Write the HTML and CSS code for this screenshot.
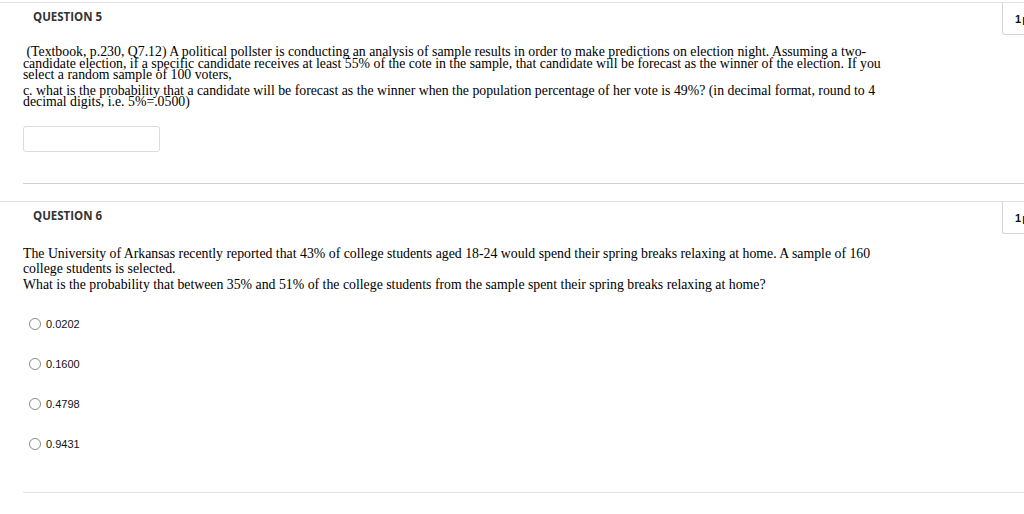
FILE: index.html
```html
<!DOCTYPE html>
<html>
<head>
<meta charset="utf-8">
<link rel="stylesheet" href="styles.css">
</head>
<body>
<div class="page">
  <section class="question q5">
    <div class="q-head">
      <h3 class="q-title">QUESTION 5</h3>
      <div class="q-points">1 points</div>
    </div>
    <div class="q-body">
      <p class="tight">&nbsp;(Textbook, p.230, Q7.12) A political pollster is conducting an analysis of sample results in order to make predictions on election night. Assuming a two-candidate election, if a specific candidate receives at least 55% of the cote in the sample, that candidate will be forecast as the winner of the election. If you select a random sample of 100 voters,</p>
      <p class="tight second">c. what is the probability that a candidate will be forecast as the winner when the population percentage of her vote is 49%? (in decimal format, round to 4 decimal digits, i.e. 5%=.0500)</p>
      <div class="answer-box"></div>
      <div class="sep"></div>
    </div>
  </section>
  <section class="question q6">
    <div class="q-head">
      <h3 class="q-title">QUESTION 6</h3>
      <div class="q-points">1 points</div>
    </div>
    <div class="q-body">
      <p class="loose">The University of Arkansas recently reported that 43% of college students aged 18-24 would spend their spring breaks relaxing at home. A sample of 160 college students is selected.<br>What is the probability that between 35% and 51% of the college students from the sample spent their spring breaks relaxing at home?</p>
      <ul class="options">
        <li class="option"><span class="radio"></span><span class="opt-text">0.0202</span></li>
        <li class="option"><span class="radio"></span><span class="opt-text">0.1600</span></li>
        <li class="option"><span class="radio"></span><span class="opt-text">0.4798</span></li>
        <li class="option"><span class="radio"></span><span class="opt-text">0.9431</span></li>
      </ul>
      <div class="sep bottom"></div>
    </div>
  </section>
</div>
</body>
</html>
```

FILE: styles.css
```css
html, body {
  margin: 0;
  padding: 0;
  overflow: hidden;
  background: #fff;
}
.page {
  width: 1080px;
  padding-top: 2px;
}
.question {
  border-top: 1px solid #e3e3e3;
}
.q-head {
  display: flex;
  justify-content: space-between;
  align-items: flex-start;
  height: 32px;
}
.q-title {
  margin: 0;
  padding: 6px 0 0 33px;
  font-family: "Open Sans", sans-serif;
  font-weight: 700;
  font-size: 11.5px;
  line-height: 15px;
  color: #333;
}
.q-points {
  box-sizing: border-box;
  width: 78px;
  height: 32px;
  border-left: 1px solid #d6d6d6;
  border-bottom: 1px solid #d6d6d6;
  border-bottom-left-radius: 3px;
  padding: 9px 0 0 12px;
  font-family: "Liberation Sans", Arial, sans-serif;
  font-weight: 700;
  font-size: 11px;
  line-height: 14px;
  word-spacing: -2px;
  color: #111;
}
.q-body {
  padding-left: 23px;
}
.q5 .q-body {
  padding-top: 11px;
}
.q6 .q-body {
  padding-top: 11.5px;
}
.tight, .loose {
  margin: 0;
  width: 870px;
  font-family: "Liberation Serif", "Times New Roman", serif;
  font-size: 13.8px;
  color: #000;
}
.tight {
  line-height: 11.5px;
}
.tight.second {
  margin-top: 4px;
}
.loose {
  line-height: 15.5px;
}
.answer-box {
  box-sizing: border-box;
  width: 137px;
  height: 26px;
  margin-top: 18.5px;
  border: 1px solid #dcdcdc;
  border-radius: 3px;
}
.sep {
  margin-top: 31px;
  height: 0;
  border-top: 1px solid #d0d0d0;
}
.q6 {
  margin-top: 17px;
}
.options {
  list-style: none;
  margin: 11.5px 0 0 0;
  padding: 0 0 0 6px;
}
.option {
  display: flex;
  align-items: center;
  gap: 5px;
  height: 40px;
}
.radio {
  box-sizing: border-box;
  width: 12px;
  height: 12px;
  border: 1px solid #8a8a8a;
  border-radius: 50%;
  background: #fff;
}
.opt-text {
  font-family: "Liberation Sans", Arial, sans-serif;
  font-size: 11px;
  color: #111;
}
.sep.bottom {
  margin-top: 28px;
  border-top-color: #e3e3e3;
}
```
